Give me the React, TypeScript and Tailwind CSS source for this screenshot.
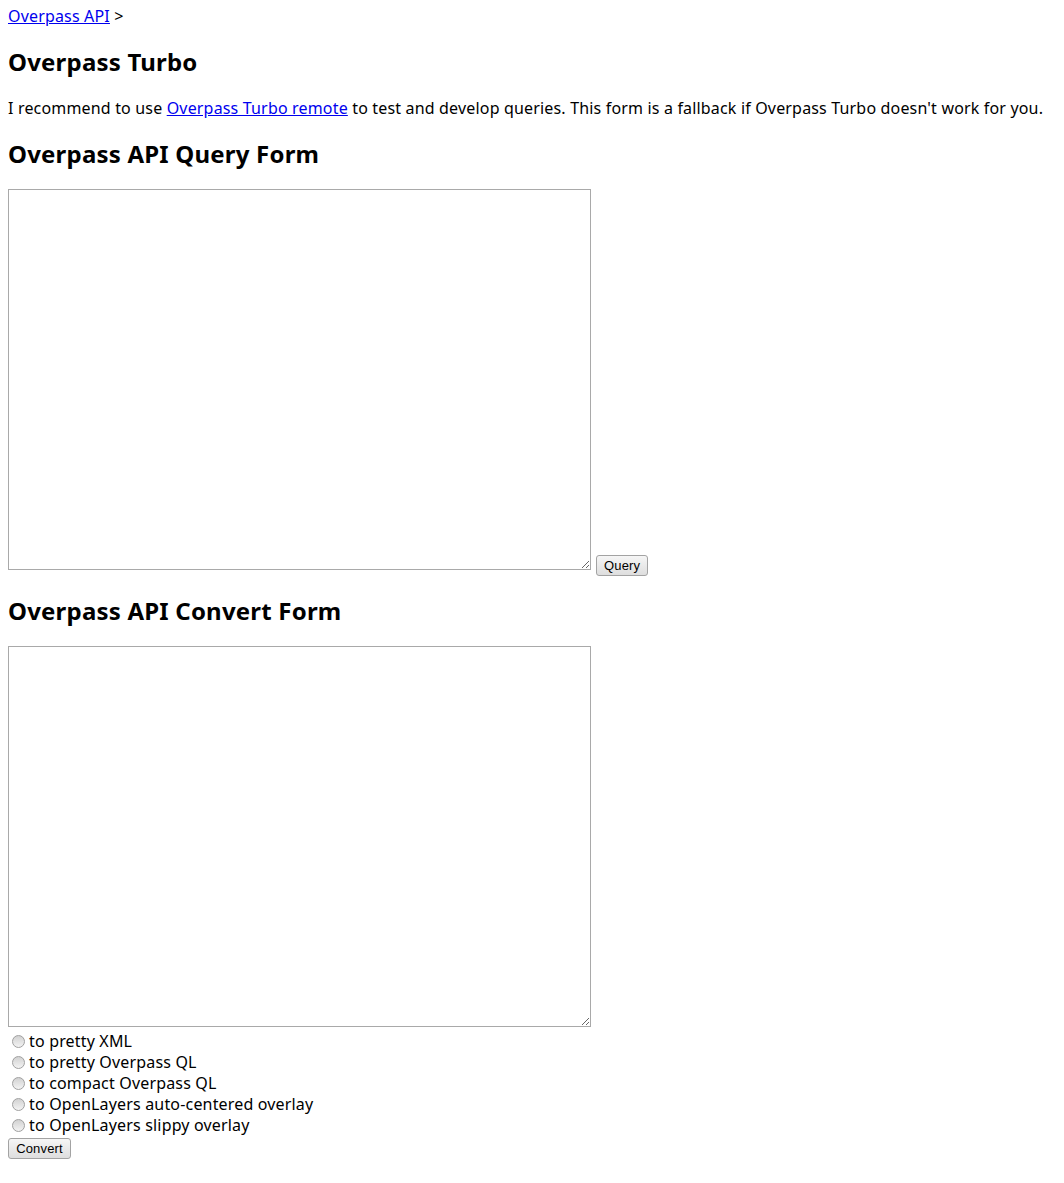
const CONVERT_OPTIONS = [
  'to pretty XML',
  'to pretty Overpass QL',
  'to compact Overpass QL',
  'to OpenLayers auto-centered overlay',
  'to OpenLayers slippy overlay',
]

const Heading = ({ children, className }: { children: React.ReactNode; className: string }) => (
  <h2 className={`text-[24px] font-bold leading-[32px] tracking-[0.2px] text-black ${className}`}>{children}</h2>
)

const WinButton = ({ label, className }: { label: string; className?: string }) => (
  <button
    type="button"
    className={`h-[21px] rounded-[3px] border border-[#a3a3a3] bg-gradient-to-b from-[#f6f6f6] to-[#dedede] px-[7px] text-[13px] leading-[19px] text-black ${className ?? ''}`}
    style={{ fontFamily: '"Liberation Sans", Arial, sans-serif' }}
  >
    {label}
  </button>
)

export default function App() {
  return (
    <div
      className="flex flex-col items-start px-2 pt-[6px] pb-6 text-base leading-[21px] tracking-[0.17px] text-black"
      style={{ fontFamily: '"Noto Sans", "Open Sans", sans-serif' }}
    >
      <div>
        <a href="#" className="text-[#0000ee] underline">
          Overpass API
        </a>{' '}
        &gt;
      </div>

      <Heading className="mt-[19px]">Overpass Turbo</Heading>

      <p className="mt-[20px] whitespace-nowrap">
        I recommend to use{' '}
        <a href="#" className="text-[#0000ee] underline">
          Overpass Turbo remote
        </a>{' '}
        to test and develop queries. This form is a fallback if Overpass Turbo doesn't work for you.
      </p>

      <Heading className="mt-[19px]">Overpass API Query Form</Heading>

      <form className="mt-[19px] flex items-end">
        <textarea className="h-[381px] w-[583px] resize border border-[#a9a9a9] bg-white" />
        <WinButton label="Query" className="ml-[5px] -mb-[6px] w-[52px]" />
      </form>

      <Heading className="mt-[25px]">Overpass API Convert Form</Heading>

      <form className="mt-[19px] flex flex-col items-start">
        <textarea className="h-[381px] w-[583px] resize border border-[#a9a9a9] bg-white" />
        <div className="mt-[4px] flex flex-col">
          {CONVERT_OPTIONS.map((option) => (
            <label key={option} className="flex h-[21px] items-center">
              <span className="ml-[4px] mr-[4px] inline-block h-[13px] w-[13px] rounded-full border border-[#a0a0a0] bg-gradient-to-b from-[#d2d2d2] to-[#f3f3f3]" />
              <span>{option}</span>
            </label>
          ))}
        </div>
        <WinButton label="Convert" className="mt-[2px] w-[63px]" />
      </form>
    </div>
  )
}
